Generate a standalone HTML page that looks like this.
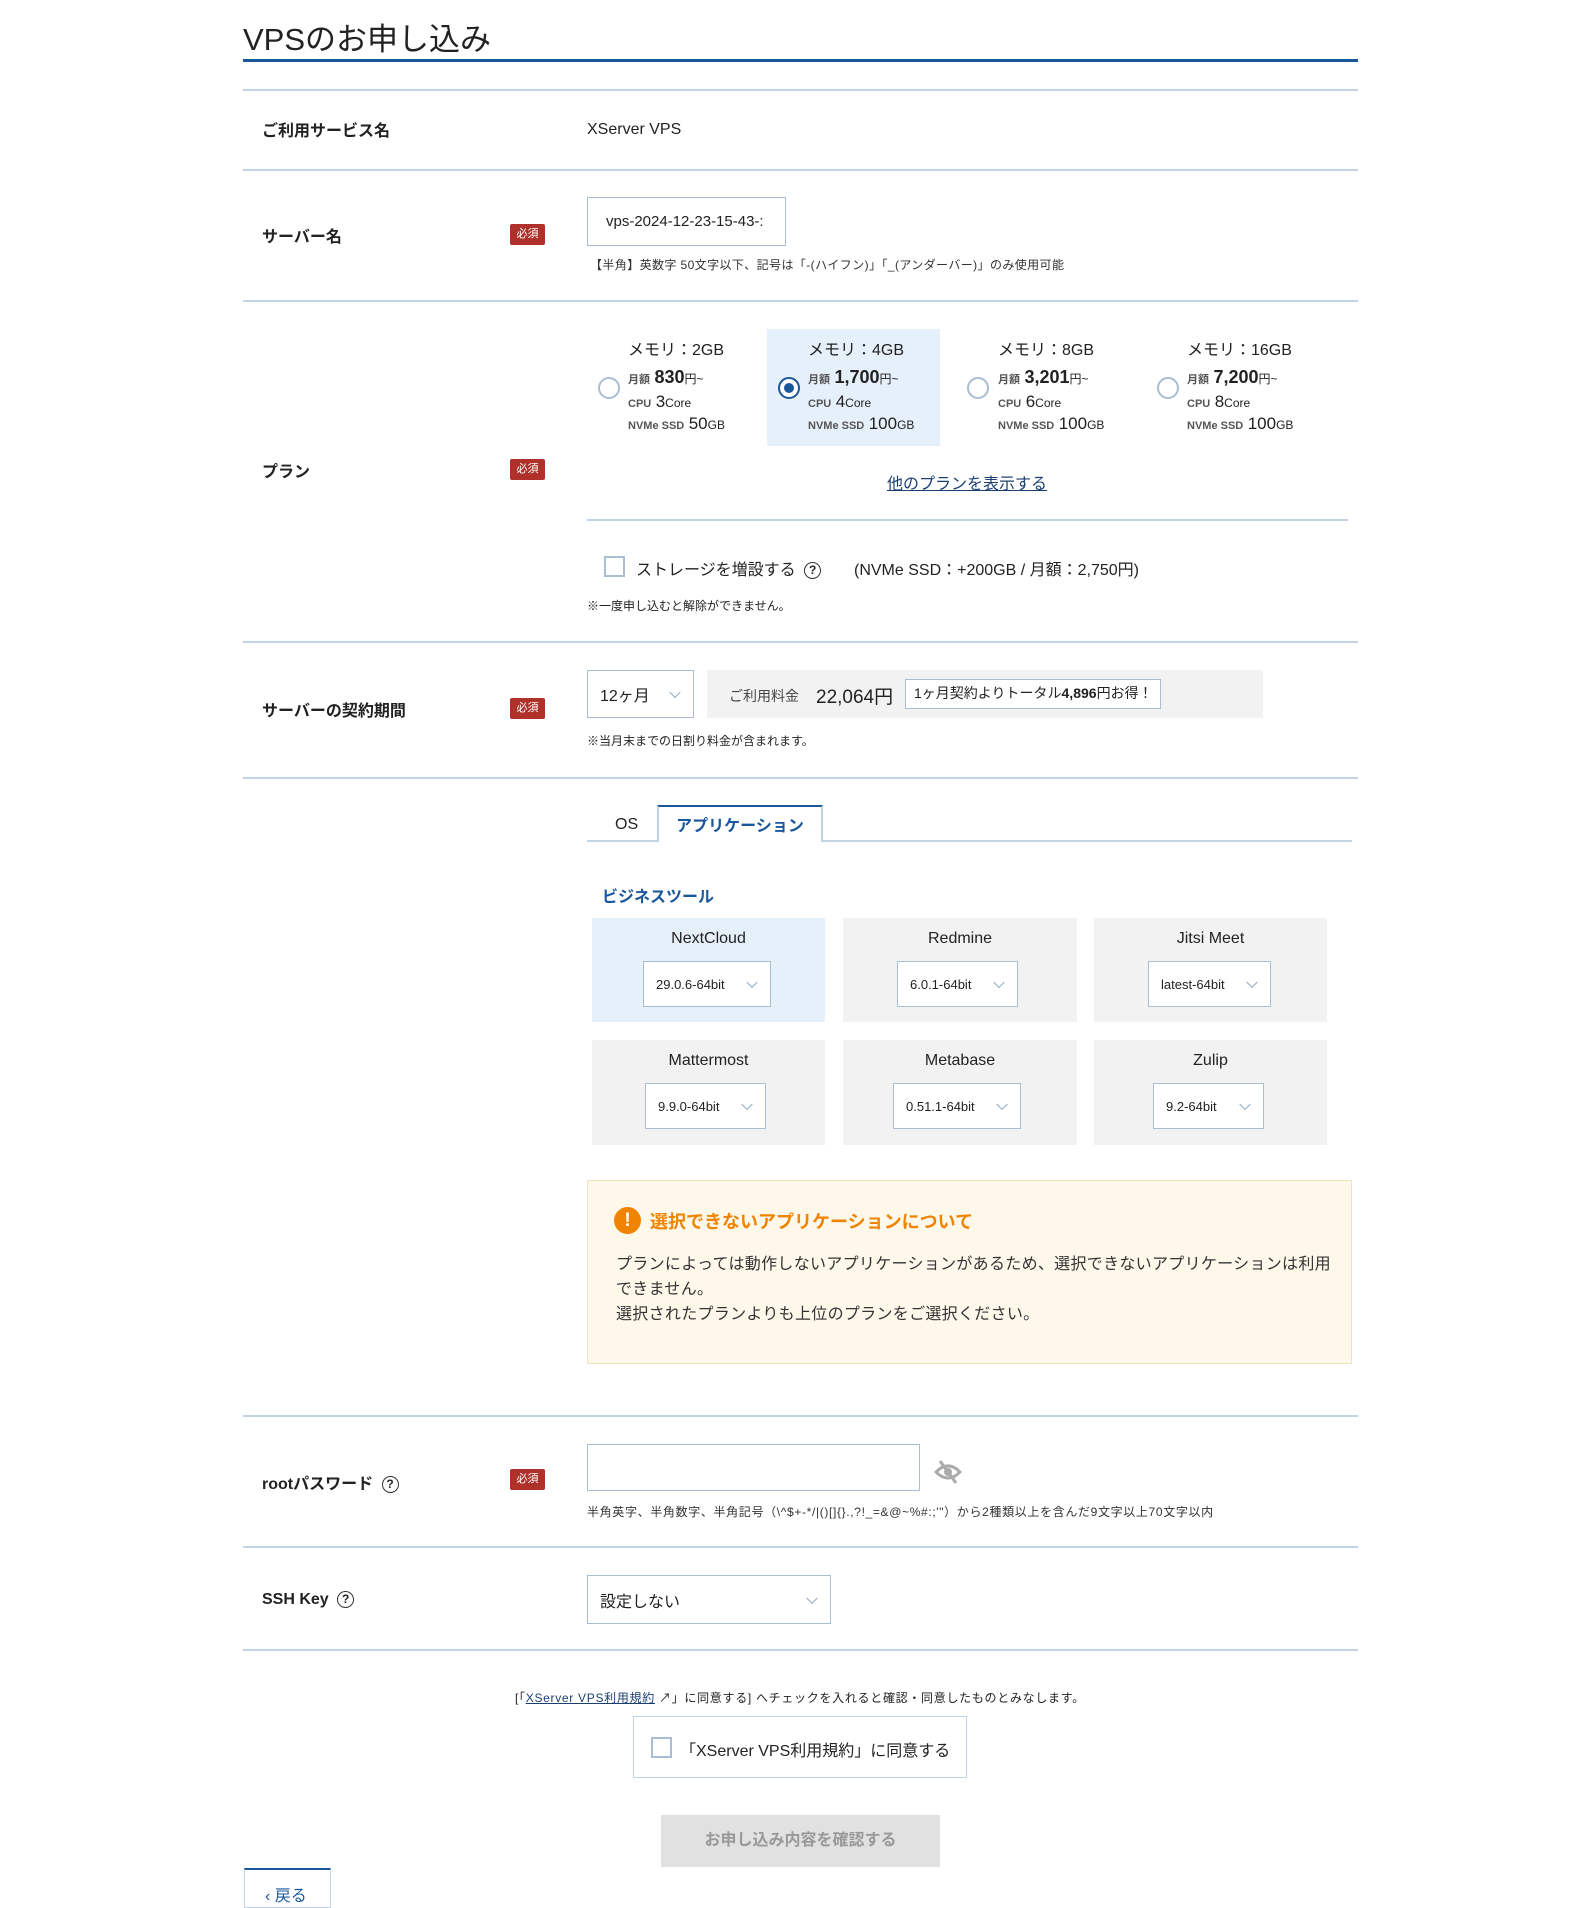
<!DOCTYPE html>
<html><head><meta charset="utf-8"><style>
*{box-sizing:border-box;margin:0;padding:0}
body{width:1580px;height:1900px;background:#fff;position:relative;overflow:hidden;font-family:"Liberation Sans","Noto Sans CJK JP",sans-serif;color:#222}
.a{position:absolute;white-space:nowrap}
.hl{position:absolute;left:243px;width:1115px;height:2px;background:#c2d3e6}
.lb{position:absolute;left:262px;font-size:16px;font-weight:bold;transform:translateY(-50%)}
.bd{position:absolute;left:510px;width:35px;height:21px;background:#b0302a;color:#fff;font-size:11px;text-align:center;line-height:21px;border-radius:2px}
.sel{position:absolute;border:1px solid #a9bdd3;background:#fff;font-size:14px;display:flex;align-items:center;padding-left:12px}
.chev{position:absolute;right:14px;top:50%;width:8px;height:8px;border-right:1.5px solid #8aa4c4;border-bottom:1.5px solid #8aa4c4;transform:translateY(-70%) rotate(45deg)}
.radio{position:absolute;width:22px;height:22px;border-radius:50%;border:2px solid #a9bdd3;background:#fff}
.pl{position:absolute;font-size:16px}
.sm{font-size:11px;color:#555;font-weight:bold}
.card{position:absolute;background:#f2f2f2}
.card .n{position:absolute;width:100%;text-align:center;top:12px;font-size:16px}
.q{display:inline-block;width:17px;height:17px;border:1.5px solid #333;border-radius:50%;font-size:12px;text-align:center;line-height:14px;font-weight:bold;vertical-align:middle;margin-left:4px}
</style></head><body>
<div class="a" style="left:243px;top:14px;font-size:31px;color:#222">VPSのお申し込み</div>
<div class="a" style="left:243px;top:59px;width:1115px;height:3px;background:#1b579b"></div>

<div class="hl" style="top:89px"></div>
<div class="lb" style="top:129px">ご利用サービス名</div>
<div class="a" style="left:587px;top:121px;font-size:16px">XServer VPS</div>
<div class="hl" style="top:169px"></div>

<div class="lb" style="top:235px">サーバー名</div>
<div class="bd" style="top:224px">必須</div>
<div class="sel" style="left:587px;top:197px;width:199px;height:49px;font-size:15px;padding-left:18px;overflow:hidden">vps-2024-12-23-15-43-:</div>
<div class="a" style="left:590px;top:256px;font-size:12px;color:#333;letter-spacing:0.4px">【半角】英数字 50文字以下、記号は「-(ハイフン)」「_(アンダーバー)」のみ使用可能</div>
<div class="hl" style="top:300px"></div>

<div class="a" style="left:767px;top:329px;width:173px;height:117px;background:#e6f0fa"></div>
<div class="radio" style="left:598px;top:377px"></div>
<div class="radio" style="left:778px;top:377px;border-color:#1b579b"><div style="position:absolute;left:4px;top:4px;width:10px;height:10px;border-radius:50%;background:#1b579b"></div></div>
<div class="radio" style="left:967px;top:377px"></div>
<div class="radio" style="left:1157px;top:377px"></div>
<div class="pl" style="left:628px;top:336px">メモリ：2GB</div>
<div class="pl" style="left:808px;top:336px">メモリ：4GB</div>
<div class="pl" style="left:998px;top:336px">メモリ：8GB</div>
<div class="pl" style="left:1187px;top:336px">メモリ：16GB</div>
<div class="pl" style="left:628px;top:367px"><span class="sm">月額</span> <b style="font-size:18px">830</b><span style="font-size:12px">円~</span></div>
<div class="pl" style="left:808px;top:367px"><span class="sm">月額</span> <b style="font-size:18px">1,700</b><span style="font-size:12px">円~</span></div>
<div class="pl" style="left:998px;top:367px"><span class="sm">月額</span> <b style="font-size:18px">3,201</b><span style="font-size:12px">円~</span></div>
<div class="pl" style="left:1187px;top:367px"><span class="sm">月額</span> <b style="font-size:18px">7,200</b><span style="font-size:12px">円~</span></div>
<div class="pl" style="left:628px;top:392px"><span class="sm">CPU</span> <span style="font-size:17px">3</span><span style="font-size:12px">Core</span></div>
<div class="pl" style="left:808px;top:392px"><span class="sm">CPU</span> <span style="font-size:17px">4</span><span style="font-size:12px">Core</span></div>
<div class="pl" style="left:998px;top:392px"><span class="sm">CPU</span> <span style="font-size:17px">6</span><span style="font-size:12px">Core</span></div>
<div class="pl" style="left:1187px;top:392px"><span class="sm">CPU</span> <span style="font-size:17px">8</span><span style="font-size:12px">Core</span></div>
<div class="pl" style="left:628px;top:414px"><span class="sm">NVMe SSD</span> <span style="font-size:17px">50</span><span style="font-size:12px">GB</span></div>
<div class="pl" style="left:808px;top:414px"><span class="sm">NVMe SSD</span> <span style="font-size:17px">100</span><span style="font-size:12px">GB</span></div>
<div class="pl" style="left:998px;top:414px"><span class="sm">NVMe SSD</span> <span style="font-size:17px">100</span><span style="font-size:12px">GB</span></div>
<div class="pl" style="left:1187px;top:414px"><span class="sm">NVMe SSD</span> <span style="font-size:17px">100</span><span style="font-size:12px">GB</span></div>
<div class="lb" style="top:470px">プラン</div>
<div class="bd" style="top:459px">必須</div>
<div class="a" style="left:887px;top:470px;font-size:16px;color:#1b3f73;text-decoration:underline">他のプランを表示する</div>
<div class="a" style="left:587px;top:519px;width:761px;height:2px;background:#c2d3e6"></div>
<div class="a" style="left:604px;top:556px;width:21px;height:21px;border:2px solid #a9bdd3"></div>
<div class="a" style="left:636px;top:556px;font-size:16px">ストレージを増設する <span class="q">?</span></div>
<div class="a" style="left:854px;top:556px;font-size:16px">(NVMe SSD：+200GB / 月額：2,750円)</div>
<div class="a" style="left:587px;top:597px;font-size:12px">※一度申し込むと解除ができません。</div>
<div class="hl" style="top:641px"></div>

<div class="lb" style="top:709px">サーバーの契約期間</div>
<div class="bd" style="top:698px">必須</div>
<div class="sel" style="left:587px;top:670px;width:107px;height:48px;font-size:16px">12ヶ月<div class="chev"></div></div>
<div class="a" style="left:707px;top:670px;width:556px;height:48px;background:#f2f2f2"></div>
<div class="a" style="left:729px;top:686px;font-size:14px;color:#444">ご利用料金</div>
<div class="a" style="left:816px;top:682px;font-size:19px">22,064円</div>
<div class="a" style="left:905px;top:679px;width:256px;height:30px;border:1.5px solid #a9bdd3;background:#fff;font-size:14px;line-height:27px;padding-left:8px">1ヶ月契約よりトータル<b>4,896</b>円お得！</div>
<div class="a" style="left:587px;top:732px;font-size:12px">※当月末までの日割り料金が含まれます。</div>
<div class="hl" style="top:777px"></div>

<div class="a" style="left:587px;top:840px;width:765px;height:2px;background:#c2d3e6"></div>
<div class="a" style="left:615px;top:816px;font-size:16px">OS</div>
<div class="a" style="left:657px;top:805px;width:166px;height:37px;border:2px solid #c2d3e6;border-top-color:#1b579b;border-bottom:none;background:#fff"></div>
<div class="a" style="left:657px;top:812px;width:166px;text-align:center;font-size:16px;font-weight:bold;color:#1b579b">アプリケーション</div>
<div class="a" style="left:602px;top:883px;font-size:16px;font-weight:bold;color:#1b579b">ビジネスツール</div>

<div class="card" style="left:592px;top:918px;width:233px;height:104px;background:#e6f0fa"><div class="n">NextCloud</div></div>
<div class="card" style="left:843px;top:918px;width:234px;height:104px"><div class="n">Redmine</div></div>
<div class="card" style="left:1094px;top:918px;width:233px;height:104px"><div class="n">Jitsi Meet</div></div>
<div class="card" style="left:592px;top:1040px;width:233px;height:105px"><div class="n">Mattermost</div></div>
<div class="card" style="left:843px;top:1040px;width:234px;height:105px"><div class="n">Metabase</div></div>
<div class="card" style="left:1094px;top:1040px;width:233px;height:105px"><div class="n">Zulip</div></div>
<div class="sel" style="left:643px;top:961px;width:128px;height:46px;font-size:13px">29.0.6-64bit<div class="chev"></div></div>
<div class="sel" style="left:897px;top:961px;width:121px;height:46px;font-size:13px">6.0.1-64bit<div class="chev"></div></div>
<div class="sel" style="left:1148px;top:961px;width:123px;height:46px;font-size:13px">latest-64bit<div class="chev"></div></div>
<div class="sel" style="left:645px;top:1083px;width:121px;height:46px;font-size:13px">9.9.0-64bit<div class="chev"></div></div>
<div class="sel" style="left:893px;top:1083px;width:128px;height:46px;font-size:13px">0.51.1-64bit<div class="chev"></div></div>
<div class="sel" style="left:1153px;top:1083px;width:111px;height:46px;font-size:13px">9.2-64bit<div class="chev"></div></div>

<div class="a" style="left:587px;top:1180px;width:765px;height:184px;background:#fef8eb;border:1.5px solid #f2e2c4"></div>
<div class="a" style="left:614px;top:1207px;width:27px;height:27px;border-radius:50%;background:#f08300;color:#fff;font-weight:bold;font-size:19px;text-align:center;line-height:27px">!</div>
<div class="a" style="left:650px;top:1208px;font-size:18px;font-weight:bold;color:#f08300">選択できないアプリケーションについて</div>
<div class="a" style="left:616px;top:1252px;font-size:16px;letter-spacing:0.3px;line-height:25px;color:#333">プランによっては動作しないアプリケーションがあるため、選択できないアプリケーションは利用<br>できません。<br>選択されたプランよりも上位のプランをご選択ください。</div>
<div class="hl" style="top:1415px"></div>

<div class="lb" style="top:1482px">rootパスワード <span class="q">?</span></div>
<div class="bd" style="top:1469px">必須</div>
<div class="a" style="left:587px;top:1444px;width:333px;height:47px;border:1.5px solid #a9bdd3"></div>
<svg class="a" style="left:934px;top:1459px" width="28" height="26" viewBox="0 0 28 26"><path d="M2 13 Q14 1 26 13 Q14 25 2 13Z" fill="none" stroke="#aaa" stroke-width="3"/><circle cx="14" cy="13" r="4" fill="#aaa"/><path d="M6 2 L22 24" stroke="#aaa" stroke-width="3"/></svg>
<div class="a" style="left:587px;top:1503px;font-size:12px;color:#333;letter-spacing:0.65px">半角英字、半角数字、半角記号（\^$+-*/|()[]{}.,?!_=&amp;@~%#:;'"）から2種類以上を含んだ9文字以上70文字以内</div>
<div class="hl" style="top:1546px"></div>

<div class="lb" style="top:1600px">SSH Key <span class="q">?</span></div>
<div class="sel" style="left:587px;top:1575px;width:244px;height:49px;font-size:16px">設定しない<div class="chev"></div></div>
<div class="hl" style="top:1649px"></div>

<div class="a" style="left:0;width:1600px;text-align:center;top:1689px;font-size:12px;letter-spacing:0.7px">[「<span style="color:#1b3f73;text-decoration:underline">XServer VPS利用規約</span> ↗」に同意する] へチェックを入れると確認・同意したものとみなします。</div>
<div class="a" style="left:633px;top:1716px;width:334px;height:62px;border:1.5px solid #c2d3e6"></div>
<div class="a" style="left:651px;top:1737px;width:21px;height:21px;border:2px solid #a9bdd3"></div>
<div class="a" style="left:680px;top:1737px;font-size:16px">「XServer VPS利用規約」に同意する</div>
<div class="a" style="left:661px;top:1815px;width:279px;height:52px;background:#e1e1e1;color:#999;font-size:16px;font-weight:bold;text-align:center;line-height:52px">お申し込み内容を確認する</div>
<div class="a" style="left:244px;top:1868px;width:87px;height:40px;border:1.5px solid #c2d3e6;border-top:2px solid #1b579b;color:#1b579b;font-size:16px;padding:12px 0 0 20px">‹ 戻る</div>
</body></html>
